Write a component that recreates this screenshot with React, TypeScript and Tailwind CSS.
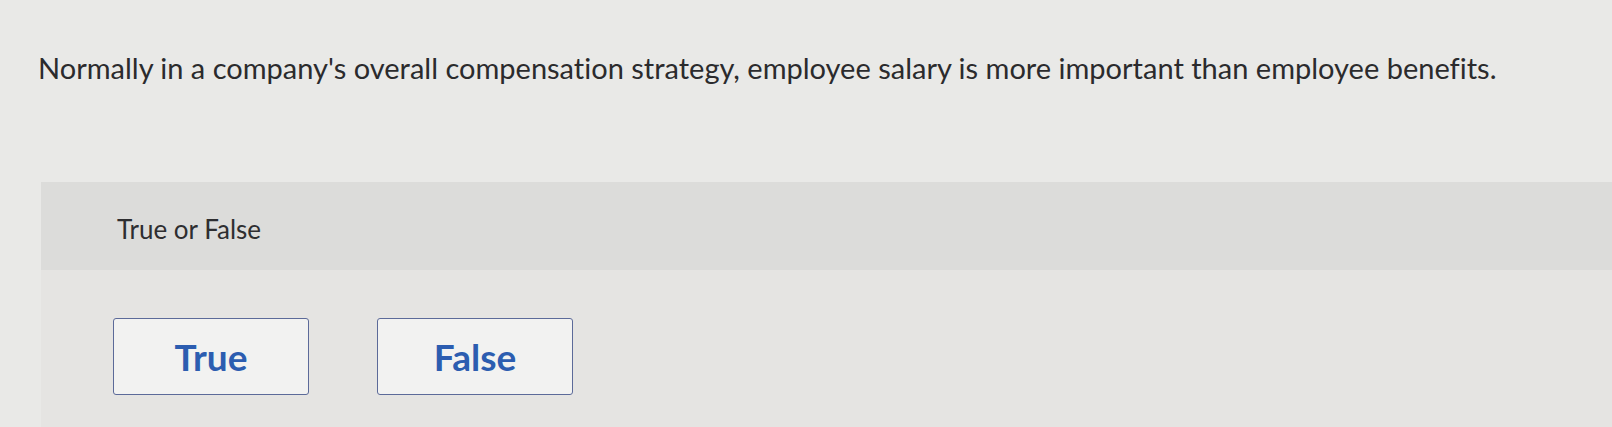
export default function App() {
  return (
    <div className="h-[427px] w-full overflow-hidden bg-[#e9e9e7] font-['Lato',sans-serif] text-[#2b2b2d] [font-variant-ligatures:none]">
      <div className="pl-[38px] pt-[50px] text-[29px] leading-[36px]">
        Normally in a company's overall compensation strategy, employee salary is more important than employee benefits.
      </div>

      <div className="ml-[41px] mt-[96px]">
        <div className="flex h-[88px] items-center bg-[#dcdcda] pb-[0px] pl-[76px] pt-[6px] text-[26px] text-[#2e2e30]">
          True or False
        </div>

        <div className="flex h-[200px] gap-[68px] bg-[#e5e4e2] pl-[72px] pt-[48px]">
          <button className="flex h-[77px] w-[196px] items-center justify-center rounded-[3px] border-[1.5px] border-[#5c6a99] bg-[#f2f2f1] text-[37px] font-bold text-[#2c5db0]">
            True
          </button>
          <button className="flex h-[77px] w-[196px] items-center justify-center rounded-[3px] border-[1.5px] border-[#5c6a99] bg-[#f2f2f1] text-[37px] font-bold text-[#2c5db0]">
            False
          </button>
        </div>
      </div>
    </div>
  );
}
